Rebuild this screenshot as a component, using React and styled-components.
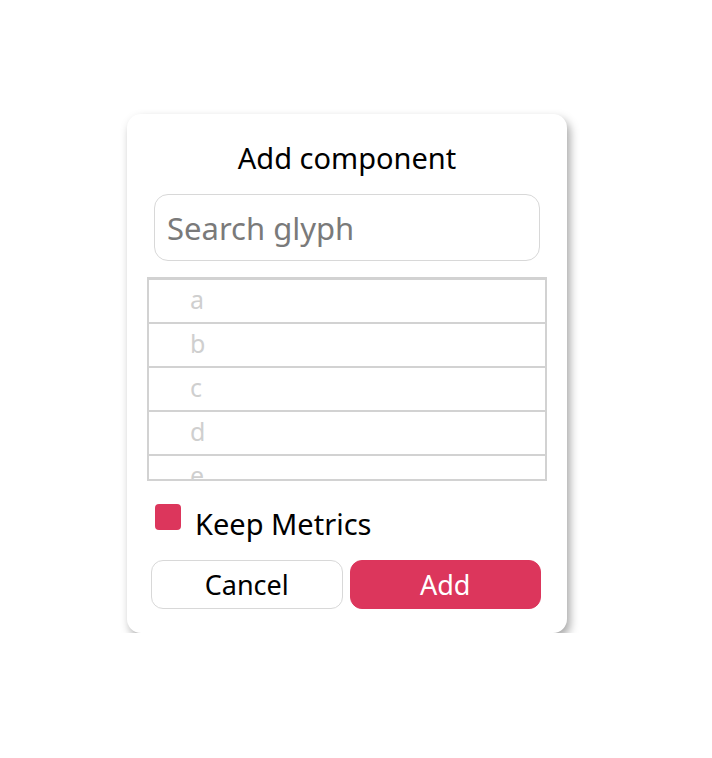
import styled, { createGlobalStyle } from "styled-components";

const GlobalStyle = createGlobalStyle`
  body {
    margin: 0;
    background: #ffffff;
    font-family: "Noto Sans", "Open Sans", sans-serif;
  }
`;

const Page = styled.div`
  padding: 114px 0 0 127px;
`;

const Dialog = styled.div`
  width: 440px;
  box-sizing: border-box;
  background: #fff;
  border-radius: 14px;
  box-shadow: 3px 5px 10px rgba(0, 0, 0, 0.35);
  padding: 26px 20px 24px 20px;
  display: flex;
  flex-direction: column;
`;

const Title = styled.h2`
  margin: 0;
  text-align: center;
  font-size: 29px;
  font-weight: 400;
  line-height: 36px;
  color: #000;
`;

const SearchInput = styled.input`
  margin: 18px 7px 0 7px;
  height: 67px;
  box-sizing: border-box;
  border: 1px solid #d8d8d8;
  border-radius: 14px;
  padding: 0 12px;
  font-family: inherit;
  font-size: 31px;
  color: #222;
  outline: none;
  &::placeholder {
    color: #7a7a7a;
  }
`;

const GlyphList = styled.div`
  margin-top: 16px;
  height: 204px;
  overflow: hidden;
  border-top: 3px solid #d2d2d2;
  border-bottom: 2px solid #d2d2d2;
  box-sizing: border-box;
`;

const GlyphRow = styled.div`
  height: 44px;
  box-sizing: border-box;
  border: 2px solid #d2d2d2;
  border-top: none;
  padding-left: 41px;
  font-size: 25px;
  line-height: 38px;
  color: #cfcfcf;
`;

const CheckRow = styled.label`
  display: flex;
  align-items: center;
  gap: 14px;
  margin: 23px 0 0 8px;
  font-size: 29px;
  line-height: 40px;
  color: #000;
`;

const Box = styled.span`
  flex: none;
  width: 26px;
  height: 26px;
  border-radius: 4px;
  background: ${({ checked }) => (checked ? "#dc365c" : "#fff")};
  margin-top: -14px;
`;

const Buttons = styled.div`
  display: grid;
  grid-template-columns: 1fr 1fr;
  gap: 7px;
  margin: 16px 6px 0 4px;
`;

const Button = styled.button`
  height: 49px;
  border-radius: 12px;
  font-family: inherit;
  font-size: 27px;
  border: 1px solid ${({ primary }) => (primary ? "#dc365c" : "#d8d8d8")};
  background: ${({ primary }) => (primary ? "#dc365c" : "#fff")};
  color: ${({ primary }) => (primary ? "#fff" : "#000")};
  padding: 0;
`;

const glyphs = ["a", "b", "c", "d", "e", "f"];

export default function App() {
  return (
    <>
      <GlobalStyle />
      <Page>
        <Dialog>
          <Title>Add component</Title>
          <SearchInput placeholder="Search glyph" />
          <GlyphList>
            {glyphs.map((g) => (
              <GlyphRow key={g}>{g}</GlyphRow>
            ))}
          </GlyphList>
          <CheckRow>
            <Box checked />
            Keep Metrics
          </CheckRow>
          <Buttons>
            <Button>Cancel</Button>
            <Button primary>Add</Button>
          </Buttons>
        </Dialog>
      </Page>
    </>
  );
}
